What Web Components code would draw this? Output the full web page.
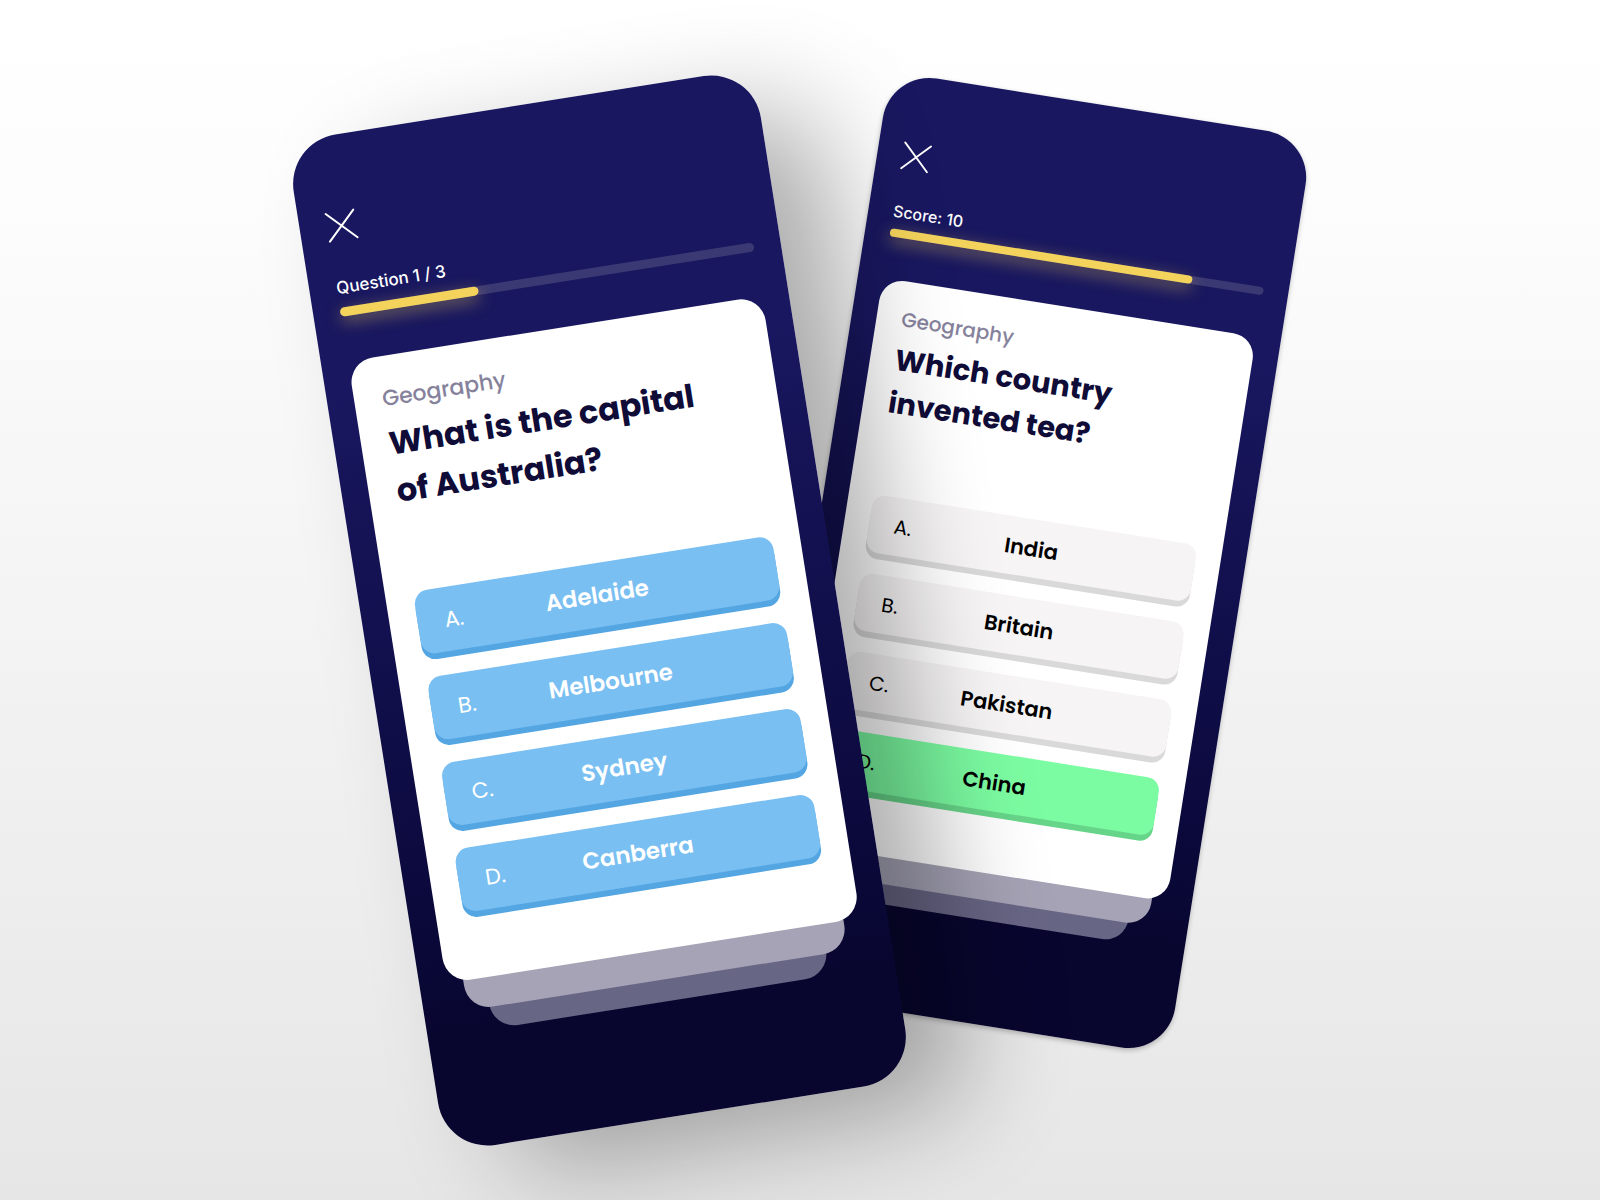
<!DOCTYPE html>
<html lang="en">
<head>
<meta charset="utf-8">
<meta name="viewport" content="width=device-width, initial-scale=1">
<title>Quiz</title>
<style>
    body {
        margin: 0;
        font-family: Poppins, Inter, "Open Sans", sans-serif;
    }
</style>
</head>
<body>

<quiz-stage>
    <quiz-phone size="large">
        <quiz-progress slot="progress" value="33.3">Question 1 / 3</quiz-progress>
        <quiz-card category="Geography">
            <span slot="question">What is the capital<br>of Australia?</span>
            <quiz-answer letter="A.">Adelaide</quiz-answer>
            <quiz-answer letter="B.">Melbourne</quiz-answer>
            <quiz-answer letter="C.">Sydney</quiz-answer>
            <quiz-answer letter="D.">Canberra</quiz-answer>
        </quiz-card>
    </quiz-phone>
    <quiz-phone size="small">
        <quiz-progress slot="progress" value="81">Score: 10</quiz-progress>
        <quiz-card category="Geography">
            <span slot="question">Which country<br>invented tea?</span>
            <quiz-answer state="plain" letter="A.">India</quiz-answer>
            <quiz-answer state="plain" letter="B.">Britain</quiz-answer>
            <quiz-answer state="plain" letter="C.">Pakistan</quiz-answer>
            <quiz-answer state="correct" letter="D.">China</quiz-answer>
        </quiz-card>
    </quiz-phone>
</quiz-stage>

<script>
const quizStage = document.createElement('template');
quizStage.innerHTML = `
    <style>

        * {
            box-sizing: border-box;
        }

        :host {
            display: block;
        }

        main {
            display: flex;
            justify-content: center;
            align-items: flex-start;
            min-height: 100vh;
            padding: 99px 0 76px 6px;
            overflow: hidden;
            background: linear-gradient(#ffffff 0%, #fdfdfd 15%, #f4f4f4 50%, #e6e6e6 100%);
        }

    </style>

    <main><slot></slot></main>
`;

const quizPhone = document.createElement('template');
quizPhone.innerHTML = `
    <style>

        * {
            box-sizing: border-box;
            margin: 0;
            padding: 0;
        }

        :host {
            display: block;
            flex: none;
            position: relative;
        }

        :host([size="large"]) {
            --phone-width: 473px;
            --phone-radius: 50px;
            --phone-top: 76px;
            --phone-side: 27px;
            --phone-bottom: 167px;
            --icon: 30px;
            --icon-gap: 34px;
            --label-size: 17px;
            --label-line: 24px;
            --label-gap: 8px;
            --bar: 9px;
            --bar-gap: 45px;
            --card-padding: 27px 28px 61px;
            --card-radius: 25px;
            --category-size: 22px;
            --category-line: 32px;
            --question-size: 32px;
            --question-line: 48px;
            --question-top: 5px;
            --answers-top: 78px;
            --answers-gap: 17px;
            --answer-height: 64px;
            --answer-size: 23px;
            --letter-size: 22px;
            --answer-radius: 14px;
            --sheet-drop: 30px;
            --sheet-inset: 17px;
            --sheet-drop-far: 52px;
            --sheet-inset-far: 39px;
            z-index: 1;
            transform: rotate(-9deg);
        }

        :host([size="small"]) {
            --phone-width: 428px;
            --phone-radius: 47px;
            --phone-top: 67px;
            --phone-side: 25px;
            --phone-bottom: 151px;
            --icon: 28px;
            --icon-gap: 31px;
            --label-size: 16px;
            --label-line: 22px;
            --label-gap: 7px;
            --bar: 8px;
            --bar-gap: 42px;
            --card-padding: 24px 25px 56px;
            --card-radius: 23px;
            --category-size: 20px;
            --category-line: 29px;
            --question-size: 29px;
            --question-line: 43px;
            --question-top: 5px;
            --answers-top: 71px;
            --answers-gap: 15px;
            --answer-height: 58px;
            --answer-size: 21px;
            --letter-size: 20px;
            --answer-radius: 13px;
            --sheet-drop: 27px;
            --sheet-inset: 15px;
            --sheet-drop-far: 47px;
            --sheet-inset-far: 35px;
            margin-left: -21px;
            transform: rotate(9deg);
        }

        section {
            width: var(--phone-width);
            padding: var(--phone-top) var(--phone-side) var(--phone-bottom);
            border-radius: var(--phone-radius);
            background: linear-gradient(#19175f 0%, #19175f 25%, #0b093c 75%, #08062e 90%, #08062e 100%);
        }

        :host([size="large"]) section {
            box-shadow: 62px 38px 110px -8px rgba(0, 0, 0, .33);
        }

        :host([size="small"]) section {
            box-shadow: 0 2px 5px rgba(0, 0, 0, .25);
        }

        button {
            display: block;
            border: 0;
            background: none;
            color: #ffffff;
            cursor: pointer;
        }

        svg {
            display: block;
            width: var(--icon);
            height: var(--icon);
            overflow: visible;
        }

        ::slotted(quiz-progress) {
            margin: var(--icon-gap) 0 var(--bar-gap);
        }

    </style>

    <section>
        <button type="button" aria-label="Close">
            <svg viewBox="0 0 30 30" fill="none" stroke="currentColor" stroke-width="2" stroke-linecap="round">
                <path d="M1 1 29 29M29 1 1 29"/>
            </svg>
        </button>
        <slot name="progress"></slot>
        <slot></slot>
    </section>
`;

const quizProgress = document.createElement('template');
quizProgress.innerHTML = `
    <style>

        :host {
            display: block;
        }

        .label {
            margin-bottom: var(--label-gap);
            color: #ffffff;
            font: 500 var(--label-size)/var(--label-line) Inter, sans-serif;
        }

        .track {
            height: var(--bar);
            border-radius: 5px;
            background: #3b3973;
        }

        .fill {
            height: 100%;
            border-radius: 5px;
            background: #f3d35c;
            box-shadow: 0 5px 16px rgba(243, 211, 92, .5);
        }

    </style>

    <div class="label" id="label"><slot></slot></div>
    <div class="track" role="progressbar" aria-labelledby="label" aria-valuemin="0" aria-valuemax="100">
        <div class="fill"></div>
    </div>
`;

const quizCard = document.createElement('template');
quizCard.innerHTML = `
    <style>

        * {
            box-sizing: border-box;
            margin: 0;
        }

        :host {
            display: block;
            position: relative;
            z-index: 0;
        }

        /* the two cards waiting under the open one */
        .sheet {
            position: absolute;
            z-index: -1;
            height: 80px;
            border-radius: var(--card-radius);
        }

        .near {
            right: var(--sheet-inset);
            bottom: calc(0px - var(--sheet-drop));
            left: var(--sheet-inset);
            background: #a5a3b5;
        }

        .far {
            right: var(--sheet-inset-far);
            bottom: calc(0px - var(--sheet-drop-far));
            left: var(--sheet-inset-far);
            background: #686685;
        }

        article {
            padding: var(--card-padding);
            border-radius: var(--card-radius);
            background: #ffffff;
        }

        .category {
            color: #86829c;
            font-size: var(--category-size);
            font-weight: 500;
            line-height: var(--category-line);
        }

        h2 {
            margin-top: var(--question-top);
            color: #100c38;
            font-size: var(--question-size);
            font-weight: 700;
            line-height: var(--question-line);
        }

        .answers {
            display: grid;
            gap: var(--answers-gap);
            margin-top: var(--answers-top);
        }

    </style>

    <div class="sheet far"></div>
    <div class="sheet near"></div>
    <article>
        <p class="category"></p>
        <h2><slot name="question"></slot></h2>
        <div class="answers"><slot></slot></div>
    </article>
`;

const quizAnswer = document.createElement('template');
quizAnswer.innerHTML = `
    <style>

        :host {
            --face: #7abff1;
            --edge: #54a6e3;
            --ink: #ffffff;
            display: block;
        }

        :host([state="plain"]) {
            --face: #f6f4f5;
            --edge: #d9d9d9;
            --ink: #000000;
        }

        :host([state="correct"]) {
            --face: #7cfca2;
            --edge: #67d589;
            --ink: #000000;
        }

        button {
            display: grid;
            align-items: center;
            width: 100%;
            height: var(--answer-height);
            margin: 0 0 6px;
            padding: 0 var(--phone-side);
            border: 0;
            border-radius: var(--answer-radius);
            background: var(--face);
            box-shadow: 0 6px 0 var(--edge);
            color: var(--ink);
            font: inherit;
            font-size: var(--answer-size);
            cursor: pointer;
        }

        .letter, .name {
            grid-area: 1 / 1;
        }

        .letter {
            justify-self: start;
            font-size: var(--letter-size);
        }

        .name {
            justify-self: center;
            font-weight: 600;
        }

    </style>

    <button type="button">
        <span class="letter"></span>
        <span class="name"><slot></slot></span>
    </button>
`;

class QuizStage extends HTMLElement {
    constructor() {
        super();
        this.attachShadow({ mode: 'open' });
        this.shadowRoot.appendChild(quizStage.content.cloneNode(true));
    };
};

class QuizPhone extends HTMLElement {
    constructor() {
        super();
        this.attachShadow({ mode: 'open' });
        this.shadowRoot.appendChild(quizPhone.content.cloneNode(true));
    };
};

class QuizProgress extends HTMLElement {
    constructor() {
        super();
        this.attachShadow({ mode: 'open' });
        this.shadowRoot.appendChild(quizProgress.content.cloneNode(true));
    };

    connectedCallback() {
        const value = this.getAttribute('value');
        this.shadowRoot.querySelector('.track').setAttribute('aria-valuenow', value);
        this.shadowRoot.querySelector('.fill').style.width = `${value}%`;
    };
};

class QuizCard extends HTMLElement {
    constructor() {
        super();
        this.attachShadow({ mode: 'open' });
        this.shadowRoot.appendChild(quizCard.content.cloneNode(true));
    };

    connectedCallback() {
        this.shadowRoot.querySelector('.category').textContent = this.getAttribute('category');
    };
};

class QuizAnswer extends HTMLElement {
    constructor() {
        super();
        this.attachShadow({ mode: 'open' });
        this.shadowRoot.appendChild(quizAnswer.content.cloneNode(true));
    };

    connectedCallback() {
        this.shadowRoot.querySelector('.letter').textContent = this.getAttribute('letter');
    };
};

customElements.define('quiz-stage', QuizStage);
customElements.define('quiz-phone', QuizPhone);
customElements.define('quiz-progress', QuizProgress);
customElements.define('quiz-card', QuizCard);
customElements.define('quiz-answer', QuizAnswer);
</script>
</body>
</html>
